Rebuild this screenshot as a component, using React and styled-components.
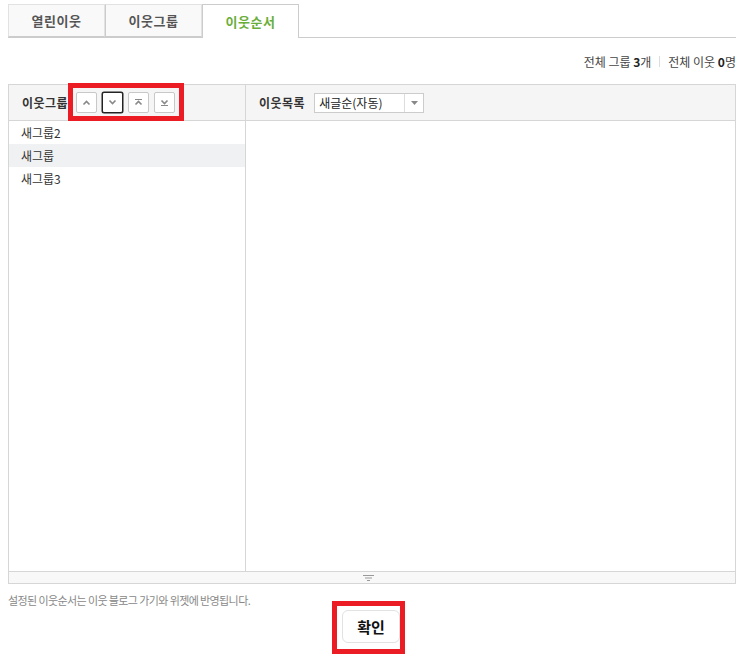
import React from "react";
import styled, { createGlobalStyle } from "styled-components";

const groups = [
  { name: "새그룹2", selected: false },
  { name: "새그룹", selected: true },
  { name: "새그룹3", selected: false },
];

const tabs = ["열린이웃", "이웃그룹", "이웃순서"];

const Arrow = ({ kind }) => (
  <svg width="9" height="9" viewBox="0 0 9 9">
    {kind === "top" && <line x1="1" y1="1.5" x2="8" y2="1.5" stroke="#888" strokeWidth="1" />}
    {kind === "bottom" && <line x1="1" y1="7.5" x2="8" y2="7.5" stroke="#888" strokeWidth="1" />}
    {(kind === "up" || kind === "top") && (
      <polyline points="1.5,6.5 4.5,3.5 7.5,6.5" fill="none" stroke="#888" strokeWidth="1.6" />
    )}
    {(kind === "down" || kind === "bottom") && (
      <polyline points="1.5,2.5 4.5,5.5 7.5,2.5" fill="none" stroke="#888" strokeWidth="1.6" />
    )}
  </svg>
);

const App = () => {
  return (
    <>
      <GlobalStyle />
      <Wrap>
        <Tabs>
          {tabs.map((t, i) => (
            <Tab key={t} active={i === 2}>
              {t}
            </Tab>
          ))}
        </Tabs>
        <Summary>
          전체 그룹 <b>3</b>개<Bar />전체 이웃 <b>0</b>명
        </Summary>
        <Panel>
          <Header>
            <HeadCell>
              <Label>이웃그룹</Label>
              <Buttons>
                <MoveButton>
                  <Arrow kind="up" />
                </MoveButton>
                <MoveButton focused>
                  <Arrow kind="down" />
                </MoveButton>
                <MoveButton>
                  <Arrow kind="top" />
                </MoveButton>
                <MoveButton>
                  <Arrow kind="bottom" />
                </MoveButton>
              </Buttons>
              <Highlight style={{ left: 59, top: -2, width: 116, height: 38 }} />
            </HeadCell>
            <HeadCell right>
              <Label>이웃목록</Label>
              <Select>
                <SelectText>새글순(자동)</SelectText>
                <SelectArrow>
                  <svg width="7" height="4" viewBox="0 0 7 4">
                    <polygon points="0,0 7,0 3.5,4" fill="#888" />
                  </svg>
                </SelectArrow>
              </Select>
            </HeadCell>
          </Header>
          <Body>
            <GroupList>
              {groups.map((g) => (
                <GroupRow key={g.name} selected={g.selected}>
                  {g.name}
                </GroupRow>
              ))}
            </GroupList>
            <NeighborList />
          </Body>
          <Resizer>
            <svg width="11" height="6" viewBox="0 0 11 6">
              <rect x="0" y="0" width="11" height="1" fill="#999" />
              <rect x="2" y="2.5" width="7" height="1" fill="#999" />
              <rect x="4" y="5" width="3" height="1" fill="#999" />
            </svg>
          </Resizer>
        </Panel>
        <Note>설정된 이웃순서는 이웃 블로그 가기와 위젯에 반영됩니다.</Note>
        <Footer>
          <ConfirmWrap>
            <Confirm>확인</Confirm>
            <Highlight style={{ left: -10, top: -9, width: 73, height: 53 }} />
          </ConfirmWrap>
        </Footer>
      </Wrap>
    </>
  );
};

export default App;

const GlobalStyle = createGlobalStyle`
  body {
    margin: 0;
    background: #fff;
    font-family: "Noto Sans CJK KR", "Noto Sans", sans-serif;
    color: #333;
  }
`;

const Wrap = styled.div`
  width: 728px;
  padding: 4px 8px 0;
`;

const Tabs = styled.ul`
  display: flex;
  margin: 0;
  padding: 0;
  list-style: none;
  height: 33px;
  border-bottom: 1px solid #ccc;
`;

const Tab = styled.li`
  box-sizing: border-box;
  width: 97px;
  height: ${(p) => (p.active ? "34px" : "33px")};
  display: flex;
  align-items: center;
  justify-content: center;
  font-size: 13px;
  font-weight: bold;
  letter-spacing: 0.6px;
  color: ${(p) => (p.active ? "#6aae3a" : "#555")};
  background: ${(p) => (p.active ? "#fff" : "#f9f9f9")};
  border: 1px solid ${(p) => (p.active ? "#ccc" : "#e2e2e2")};
  border-bottom: ${(p) => (p.active ? "none" : "1px solid #ccc")};
  & + & {
    border-left: ${(p) => (p.active ? "1px solid #ccc" : "none")};
  }
`;

const Summary = styled.div`
  height: 46px;
  display: flex;
  align-items: center;
  justify-content: flex-end;
  font-size: 12px;
  color: #444;
  white-space: pre;
  b {
    font-weight: bold;
    color: #222;
  }
`;

const Bar = styled.span`
  display: inline-block;
  width: 1px;
  height: 11px;
  background: #ddd;
  margin: 0 8px;
`;

const Panel = styled.div`
  border: 1px solid #d6d6d6;
`;

const Header = styled.div`
  display: grid;
  grid-template-columns: 236px 1fr;
  height: 35px;
  background: #f5f5f5;
  border-bottom: 1px solid #d6d6d6;
`;

const HeadCell = styled.div`
  position: relative;
  display: flex;
  align-items: center;
  padding-left: 13px;
  gap: ${(p) => (p.right ? "9px" : "8px")};
  border-left: ${(p) => (p.right ? "1px solid #d6d6d6" : "none")};
`;

const Label = styled.span`
  font-size: 12px;
  font-weight: bold;
  letter-spacing: 0.5px;
  color: #333;
`;

const Buttons = styled.div`
  display: flex;
  gap: 5px;
`;

const MoveButton = styled.button`
  box-sizing: border-box;
  width: 21px;
  height: 21px;
  padding: 0;
  display: flex;
  align-items: center;
  justify-content: center;
  background: #fff;
  border: 1px solid ${(p) => (p.focused ? "#222" : "#c8c8c8")};
  border-radius: 2px;
  box-shadow: ${(p) => (p.focused ? "0 0 0 0.5px #222" : "none")};
`;

const Select = styled.div`
  box-sizing: border-box;
  display: flex;
  width: 110px;
  height: 20px;
  background: #fff;
  border: 1px solid #ccc;
`;

const SelectText = styled.span`
  flex: 1;
  font-size: 12px;
  line-height: 18px;
  padding-left: 4px;
  color: #222;
`;

const SelectArrow = styled.span`
  width: 18px;
  display: flex;
  align-items: center;
  justify-content: center;
  border-left: 1px solid #ddd;
`;

const Body = styled.div`
  display: grid;
  grid-template-columns: 236px 1fr;
  height: 450px;
`;

const GroupList = styled.ul`
  margin: 0;
  padding: 0;
  list-style: none;
`;

const GroupRow = styled.li`
  height: 23px;
  line-height: 23px;
  padding-left: 12px;
  font-size: 12px;
  color: #333;
  background: ${(p) => (p.selected ? "#f0f1f3" : "transparent")};
`;

const NeighborList = styled.div`
  border-left: 1px solid #d6d6d6;
`;

const Resizer = styled.div`
  height: 11px;
  display: flex;
  align-items: center;
  justify-content: center;
  padding-right: 8px;
  background: #f8f8f8;
  border-top: 1px solid #d6d6d6;
`;

const Note = styled.p`
  margin: 8px 0 0;
  font-size: 11px;
  color: #888;
  letter-spacing: -0.6px;
`;

const Footer = styled.div`
  display: flex;
  justify-content: center;
  padding: 2px 2px 15px 0;
`;

const ConfirmWrap = styled.div`
  position: relative;
  display: flex;
`;

const Confirm = styled.button`
  box-sizing: border-box;
  width: 58px;
  height: 33px;
  background: #fff;
  border: 1px solid #e2e2e2;
  border-radius: 6px;
  font-family: "Noto Sans CJK KR", sans-serif;
  font-size: 15px;
  font-weight: bold;
  color: #111;
`;

const Highlight = styled.div`
  position: absolute;
  box-sizing: border-box;
  border: 5px solid #ec1c24;
  pointer-events: none;
`;
